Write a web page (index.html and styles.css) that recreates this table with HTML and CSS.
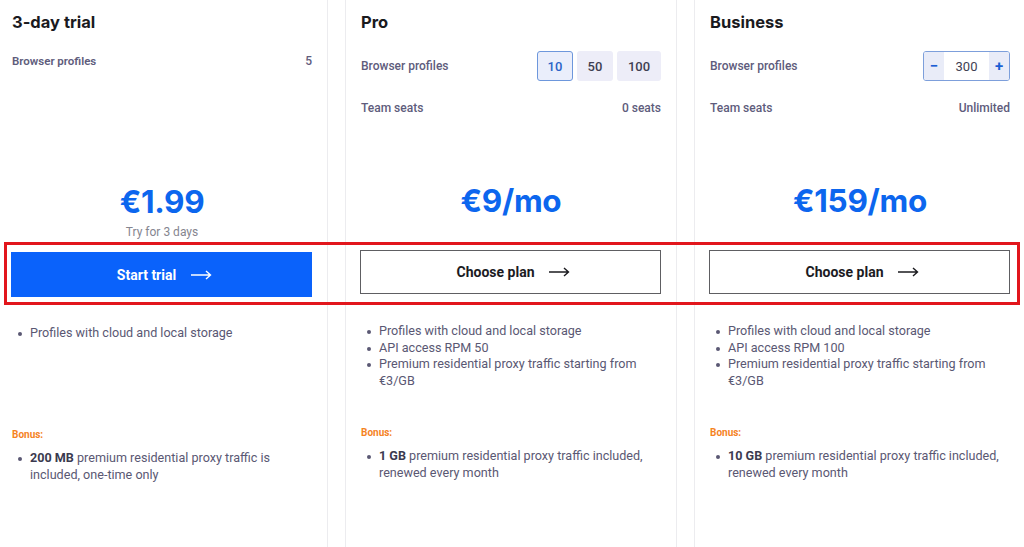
FILE: index.html
```html
<!DOCTYPE html>
<html lang="en">
<head>
<meta charset="utf-8">
<title>Pricing</title>
<link rel="stylesheet" href="styles.css">
</head>
<body>
<main class="plans">
  <section class="card">
    <h2 class="title">3-day trial</h2>
    <div class="specs">
      <div class="spec spec--compact"><span class="spec-label spec-label--strong">Browser profiles</span><span class="spec-value">5</span></div>
    </div>
    <div class="price-area price-area--trial">
      <div class="price">€1.99</div>
      <div class="price-note">Try for 3 days</div>
    </div>
    <a class="btn btn--primary" href="#">Start trial
      <svg class="arrow" width="21" height="10" viewBox="0 0 21 10"><path d="M0 5H19.5M15 1L19.5 5L15 9" fill="none" stroke="currentColor" stroke-width="1.4"/></svg>
    </a>
    <ul class="features features--trial">
      <li>Profiles with cloud and local storage</li>
    </ul>
    <div class="bonus-label bonus-label--trial">Bonus:</div>
    <ul class="features bonus-list">
      <li><b>200 MB</b> premium residential proxy traffic is included, one-time only</li>
    </ul>
  </section>

  <section class="card">
    <h2 class="title">Pro</h2>
    <div class="specs">
      <div class="spec">
        <span class="spec-label">Browser profiles</span>
        <div class="seg">
          <span class="seg-item seg-item--active">10</span>
          <span class="seg-item">50</span>
          <span class="seg-item seg-item--wide">100</span>
        </div>
      </div>
      <div class="spec spec--seats"><span class="spec-label">Team seats</span><span class="spec-value">0 seats</span></div>
    </div>
    <div class="price-area">
      <div class="price">€9/mo</div>
    </div>
    <a class="btn btn--outline" href="#">Choose plan
      <svg class="arrow" width="21" height="10" viewBox="0 0 21 10"><path d="M0 5H19.5M15 1L19.5 5L15 9" fill="none" stroke="currentColor" stroke-width="1.4"/></svg>
    </a>
    <ul class="features">
      <li>Profiles with cloud and local storage</li>
      <li>API access RPM 50</li>
      <li>Premium residential proxy traffic starting from €3/GB</li>
    </ul>
    <div class="bonus-label">Bonus:</div>
    <ul class="features bonus-list">
      <li><b>1 GB</b> premium residential proxy traffic included, renewed every month</li>
    </ul>
  </section>

  <section class="card">
    <h2 class="title">Business</h2>
    <div class="specs">
      <div class="spec">
        <span class="spec-label">Browser profiles</span>
        <div class="stepper">
          <span class="step-btn">−</span>
          <span class="step-value">300</span>
          <span class="step-btn">+</span>
        </div>
      </div>
      <div class="spec spec--seats"><span class="spec-label">Team seats</span><span class="spec-value">Unlimited</span></div>
    </div>
    <div class="price-area">
      <div class="price">€159/mo</div>
    </div>
    <a class="btn btn--outline" href="#">Choose plan
      <svg class="arrow" width="21" height="10" viewBox="0 0 21 10"><path d="M0 5H19.5M15 1L19.5 5L15 9" fill="none" stroke="currentColor" stroke-width="1.4"/></svg>
    </a>
    <ul class="features">
      <li>Profiles with cloud and local storage</li>
      <li>API access RPM 100</li>
      <li>Premium residential proxy traffic starting from €3/GB</li>
    </ul>
    <div class="bonus-label">Bonus:</div>
    <ul class="features bonus-list">
      <li><b>10 GB</b> premium residential proxy traffic included, renewed every month</li>
    </ul>
  </section>

  <div class="highlight"></div>
</main>
</body>
</html>
```
FILE: styles.css
```css
* { box-sizing: border-box; }
html, body { margin: 0; padding: 0; background: #fff; overflow: hidden; }
body {
  font-family: Roboto, "Liberation Sans", sans-serif;
  color: #1b1b1f;
  width: 1024px;
  height: 547px;
}
.plans {
  position: relative;
  display: flex;
  gap: 17px;
  margin-left: -4px;
  height: 547px;
  overflow: hidden;
}
.card {
  flex: 0 0 332px;
  min-height: 600px;
  border: 1px solid #ececef;
  border-top: 0;
  padding: 0 15px;
  display: flex;
  flex-direction: column;
}
.title {
  margin: 0;
  padding-top: 11px;
  font-family: Inter, Roboto, sans-serif;
  font-weight: 700;
  font-size: 16.5px;
  line-height: 22px;
  color: #1a1a1e;
}
.specs {
  height: 142px;
  padding-top: 18px;
}
.spec {
  display: flex;
  align-items: center;
  justify-content: space-between;
  height: 30px;
  font-size: 12px;
}
.spec--compact { height: 20px; }
.spec--seats { height: 20px; margin-top: 17px; }
.spec-label { color: #5e5c7c; font-weight: 500; }
.spec-label--strong { font-weight: 600; font-size: 11.5px; }
.spec-value { color: #5e5c7c; font-weight: 500; }
.seg { display: flex; gap: 4px; }
.seg-item {
  width: 36px;
  height: 30px;
  display: flex;
  align-items: center;
  justify-content: center;
  background: #ededf8;
  border-radius: 3px;
  color: #3f3f52;
  font-size: 13px;
  font-weight: 500;
}
.seg-item--wide { width: 44px; }
.seg-item--active {
  border: 1px solid #6d97dc;
  color: #2c63c7;
  background: #eaeefb;
}
.stepper {
  display: flex;
  width: 87px;
  height: 30px;
  border: 1px solid #7d9fdb;
  border-radius: 3px;
  overflow: hidden;
}
.step-btn {
  width: 20px;
  display: flex;
  align-items: center;
  justify-content: center;
  background: #e9ecf8;
  color: #1c5fd4;
  font-weight: 700;
  font-size: 15px;
}
.step-value {
  flex: 1;
  display: flex;
  align-items: center;
  justify-content: center;
  font-size: 13px;
  color: #3f3f52;
}
.price-area {
  height: 75px;
  padding-top: 6px;
  text-align: center;
}
.price-area--trial { height: 77px; padding-top: 7px; }
.price {
  font-family: Inter, Roboto, sans-serif;
  font-weight: 700;
  font-size: 31.5px;
  line-height: 40px;
  color: #0c66ee;
  letter-spacing: -0.3px;
}
.price-note {
  margin-top: 2px;
  font-size: 12px;
  line-height: 16px;
  color: #85858f;
}
.btn {
  display: flex;
  align-items: center;
  justify-content: center;
  gap: 15px;
  height: 44px;
  margin-left: -1px;
  font-size: 14px;
  font-weight: 700;
  text-decoration: none;
  padding-left: 6px;
}
.btn--primary {
  height: 45px;
  background: #0a62fb;
  color: #fff;
}
.btn--outline {
  border: 1px solid #5e5e62;
  color: #1b1b1f;
}
.arrow { display: block; }
.features {
  list-style: none;
  margin: 29px 0 0;
  padding: 0;
  height: 103px;
  font-size: 12.6px;
  line-height: 16.5px;
  color: #5a5873;
}
.features--trial { margin-top: 28px; }
.features li {
  position: relative;
  padding-left: 18px;
  padding-right: 8px;
}
.features li::before {
  content: "";
  position: absolute;
  left: 6px;
  top: 7px;
  width: 4px;
  height: 4px;
  border-radius: 50%;
  background: #5a5873;
}
.features b { color: #3b3a4f; font-weight: 700; }
.bonus-label {
  font-size: 10px;
  line-height: 14px;
  font-weight: 700;
  color: #f5831f;
}
.bonus-label--trial { margin-top: 0; }
.bonus-list { margin-top: 8px; height: auto; }
.highlight {
  position: absolute;
  left: 8px;
  top: 242px;
  width: 1016px;
  height: 63px;
  border: 3px solid #e2161c;
  pointer-events: none;
}
```
